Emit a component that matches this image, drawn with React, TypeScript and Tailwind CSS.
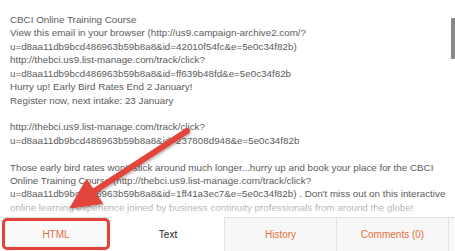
import React from 'react';

const lines: string[] = [
  'CBCI Online Training Course',
  'View this email in your browser (http://us9.campaign-archive2.com/?',
  'u=d8aa11db9bcd486963b59b8a8&id=42010f54fc&e=5e0c34f82b)',
  'http://thebci.us9.list-manage.com/track/click?',
  'u=d8aa11db9bcd486963b59b8a8&id=ff639b48fd&e=5e0c34f82b',
  'Hurry up! Early Bird Rates End 2 January!',
  'Register now, next intake: 23 January',
  '',
  'http://thebci.us9.list-manage.com/track/click?',
  'u=d8aa11db9bcd486963b59b8a8&id=237808d948&e=5e0c34f82b',
  '',
  "Those early bird rates won't stick around much longer...hurry up and book your place for the CBCI",
  'Online Training Course (http://thebci.us9.list-manage.com/track/click?',
  "u=d8aa11db9bcd486963b59b8a8&id=1ff41a3ec7&e=5e0c34f82b) . Don't miss out on this interactive",
  'online learning experience joined by business continuity professionals from around the globe!',
];

export default function App() {
  return (
    <div className="relative w-[455px] h-[251px] overflow-hidden bg-white font-['Liberation_Sans',Arial,sans-serif]">
      {/* Email body */}
      <div className="relative h-[217px] overflow-hidden pl-[10px] pt-[13px] text-[9.8px] leading-[13.43px] text-[#5c5c5c]">
        {lines.map((line, i) => (
          <div key={i} className="whitespace-nowrap h-[13.43px]">
            {line}
          </div>
        ))}
        {/* fade at bottom */}
        <div className="absolute left-0 right-0 bottom-0 h-[14px] bg-gradient-to-b from-white/40 to-white/80" />
        {/* scrollbar */}
        <div className="absolute right-0 top-[18px] w-[4px] h-[41px] rounded-l-[1px] bg-[#8a8a8a]" />
      </div>

      {/* Tabs */}
      <div className="flex h-[34px] text-[10px]">
        <div className="w-[112px] flex items-center justify-center bg-[#fafafa] border-t border-[#e2e2e2] text-[#e6703a]">
          HTML
        </div>
        <div className="w-[112px] flex items-center justify-center bg-white text-[#222]">Text</div>
        <div className="w-[112px] flex items-center justify-center bg-[#f7f7f7] border-t border-l border-[#e2e2e2] text-[#e6703a]">
          History
        </div>
        <div className="w-[112px] flex items-center justify-center bg-[#f7f7f7] border-t border-l border-[#e2e2e2] text-[#e6703a]">
          Comments (0)
        </div>
        <div className="flex-1 bg-[#f7f7f7] border-t border-l border-[#e2e2e2]" />
      </div>

      {/* Annotation: red box */}
      <div className="absolute left-[2px] top-[218px] w-[108px] h-[32px] rounded-[5px] border-[3px] border-[#e2443b]" />

      {/* Annotation: arrow */}
      <svg
        className="absolute inset-0 pointer-events-none"
        width="455"
        height="251"
        viewBox="0 0 455 251"
      >
        <defs>
          <filter id="sh" x="-20%" y="-20%" width="140%" height="140%">
            <feDropShadow dx="1" dy="1.5" stdDeviation="1.2" floodColor="#000" floodOpacity="0.3" />
          </filter>
        </defs>
        <g filter="url(#sh)" fill="#e2443b" stroke="#e2443b">
          <line x1="187" y1="131" x2="93" y2="192" strokeWidth="6" strokeLinecap="round" />
          <polygon points="70,208 102.5,203.5 86.5,179.5" strokeWidth="1" strokeLinejoin="round" />
        </g>
      </svg>
    </div>
  );
}
